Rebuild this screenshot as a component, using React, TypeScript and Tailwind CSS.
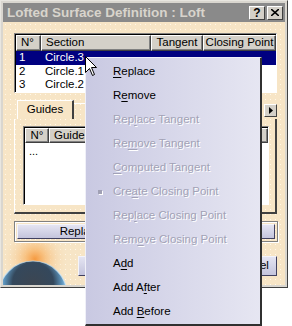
import React from "react";

type Item = { pre: string; key: string; post: string; disabled?: boolean; bullet?: boolean };

const items: Item[] = [
  { pre: "", key: "R", post: "eplace" },
  { pre: "R", key: "e", post: "move" },
  { pre: "Rep", key: "l", post: "ace Tangent", disabled: true },
  { pre: "Re", key: "m", post: "ove Tangent", disabled: true },
  { pre: "", key: "C", post: "omputed Tangent", disabled: true },
  { pre: "Cre", key: "a", post: "te Closing Point", disabled: true, bullet: true },
  { pre: "Rep", key: "l", post: "ace Closing Point", disabled: true },
  { pre: "Rem", key: "o", post: "ve Closing Point", disabled: true },
  { pre: "A", key: "d", post: "d" },
  { pre: "Add A", key: "f", post: "ter" },
  { pre: "Add ", key: "B", post: "efore" },
];

const sections = [
  ["1", "Circle.3"],
  ["2", "Circle.1"],
  ["3", "Circle.2"],
];

function HeaderCell({ children, className = "" }: { children?: React.ReactNode; className?: string }) {
  return (
    <div
      className={`h-full flex items-center whitespace-nowrap overflow-hidden bg-[#d4d0c8] border-t border-l border-t-white border-l-white border-r border-b border-r-[#404040] border-b-[#404040] shadow-[inset_-1px_-1px_0_#808080] ${className}`}
    >
      {children}
    </div>
  );
}

function Globe() {
  return (
    <svg width="90" height="42" viewBox="0 0 90 42" className="absolute left-0 bottom-0">
      <defs>
        <radialGradient id="glow" cx="32" cy="16" r="34" gradientUnits="userSpaceOnUse">
          <stop offset="0" stopColor="#f59a40" />
          <stop offset="0.3" stopColor="#f8bd78" stopOpacity="0.85" />
          <stop offset="1" stopColor="#f7e5c6" stopOpacity="0" />
        </radialGradient>
        <radialGradient id="earth" cx="30" cy="40" r="34" gradientUnits="userSpaceOnUse">
          <stop offset="0" stopColor="#3c4652" />
          <stop offset="0.6" stopColor="#34485c" />
          <stop offset="0.85" stopColor="#5c94bc" />
          <stop offset="1" stopColor="#a4d0ec" />
        </radialGradient>
      </defs>
      <rect x="0" y="0" width="90" height="42" fill="url(#glow)" />
      <circle cx="30" cy="52" r="34" fill="url(#earth)" />
      <circle cx="30" cy="52" r="34" fill="none" stroke="#bfe0f6" strokeWidth="1.2" opacity="0.7" />
    </svg>
  );
}

function Cursor() {
  return (
    <svg width="13" height="21" viewBox="0 0 13 21" className="absolute left-[85px] top-[56px]">
      <path
        d="M0.5 0.5 L0.5 16.5 L4.5 12.5 L7.5 19.5 L9.5 18.5 L6.5 11.5 L11.5 11.5 Z"
        fill="#fff"
        stroke="#000"
        strokeWidth="1"
      />
    </svg>
  );
}

const blueBtn =
  "bg-[linear-gradient(#e4e4f2,#c4c4dc)] border-t border-l border-t-[#f4f4fa] border-l-[#f4f4fa] border-r border-b border-r-[#404060] border-b-[#404060] flex items-center justify-center";

export default function App() {
  return (
    <div className="relative w-[292px] h-[326px] bg-white overflow-hidden font-['Liberation_Sans',Arial,sans-serif] text-[11.5px] text-black leading-none">
      {/* dialog window */}
      <div className="w-[288px] h-[288px] bg-[#d9d6cf] border-t border-l border-t-[#e8e6e0] border-l-[#e8e6e0] border-r border-b border-r-[#404040] border-b-[#404040] p-[2px] flex flex-col">
        {/* title bar */}
        <div className="h-[19px] bg-[#8a8a8a] flex items-center pl-[4px] pr-[2px] shrink-0">
          <span className="font-bold text-[13.5px] text-[#d8d4cc] flex-1 whitespace-nowrap">
            Lofted Surface Definition : Loft
          </span>
          <div className="flex gap-[2px]">
            <div className="w-[16px] h-[14px] bg-[#d4d0c8] border-t border-l border-t-white border-l-white border-r border-b border-r-[#404040] border-b-[#404040] flex items-center justify-center font-bold text-[12px]">
              ?
            </div>
            <div className="w-[16px] h-[14px] bg-[#d4d0c8] border-t border-l border-t-white border-l-white border-r border-b border-r-[#404040] border-b-[#404040] flex items-center justify-center">
              <svg width="8" height="7" viewBox="0 0 8 7">
                <path d="M0 0 L8 7 M8 0 L0 7" stroke="#000" strokeWidth="1.6" />
              </svg>
            </div>
          </div>
        </div>

        {/* body */}
        <div className="relative flex-1 bg-[#f7e5c6] bg-[radial-gradient(#fff8ea_0.8px,transparent_0.8px)] bg-[length:5px_5px] pl-[11px] pr-[8px] pt-[11px] flex flex-col overflow-hidden">
          <Globe />

          {/* sections list */}
          <div className="relative w-[263px] h-[60px] bg-white border-t border-l border-t-[#808080] border-l-[#808080] border-r border-b border-r-white border-b-white shadow-[inset_1px_1px_0_#000] pl-[1px] pt-[1px] flex flex-col">
            <div className="h-[16px] flex shrink-0">
              <HeaderCell className="w-[25px] px-[4px]">N°</HeaderCell>
              <HeaderCell className="w-[110px] px-[4px]">Section</HeaderCell>
              <HeaderCell className="w-[52px] justify-center">Tangent</HeaderCell>
              <HeaderCell className="flex-1 justify-center">Closing Point</HeaderCell>
            </div>
            {sections.map(([n, s], i) => (
              <div
                key={n}
                className={`h-[14px] flex items-center ${i === 0 ? "bg-[#000080] text-white" : ""}`}
              >
                <span className="w-[25px] pl-[3px]">{n}</span>
                <span className="pl-[4px]">{s}</span>
              </div>
            ))}
          </div>

          {/* tabs */}
          <div className="relative mt-[7px] h-[19px] flex items-end shrink-0">
            <div className="ml-[3px] h-[19px] w-[57px] border-t border-l border-t-white border-l-white border-r-2 border-r-[#404040] flex items-center justify-center bg-[#f7e5c6]">
              Guides
            </div>
            <div className="h-[16px] w-[20px] border-t border-t-white" />
            <div className="flex-1" />
            <div className="mb-[2px] w-[13px] h-[13px] bg-[#d4d0c8] border-t border-l border-t-white border-l-white border-r border-b border-r-[#404040] border-b-[#404040] flex items-center justify-center">
              <svg width="4" height="7" viewBox="0 0 4 7">
                <path d="M0 0 L4 3.5 L0 7 Z" fill="#000" />
              </svg>
            </div>
          </div>

          {/* tab panel */}
          <div className="relative w-[263px] h-[95px] border-l border-l-white border-b-2 border-b-[#404040] border-r-2 border-r-[#404040] pl-[8px] pt-[7px] shrink-0">
            <div className="w-[246px] h-[79px] bg-white border-t border-l border-t-[#808080] border-l-[#808080] border-r border-b border-r-white border-b-white shadow-[inset_1px_1px_0_#000] pl-[1px] pt-[1px]">
              <div className="h-[15px] flex">
                <HeaderCell className="w-[24px] justify-center">N°</HeaderCell>
                <HeaderCell className="w-[208px] px-[4px]">Guide</HeaderCell>
                <HeaderCell className="flex-1" />
              </div>
              <div className="pl-[4px] pt-[3px] text-[11px]">...</div>
            </div>
          </div>

          {/* replace buttons */}
          <div className="relative mt-[7px] w-[264px] h-[21px] border border-[#808080] shadow-[inset_1px_1px_0_#fff,1px_1px_0_#fff] p-[2px] flex gap-[3px] shrink-0">
            <div className={`flex-1 ${blueBtn}`}>Replace</div>
            <div className={`flex-1 ${blueBtn}`}>Remove</div>
          </div>

          {/* bottom buttons */}
          <div className="relative mt-[13px] h-[21px] flex items-center shrink-0">
            <div className={`ml-[64px] w-[60px] h-[20px] ${blueBtn}`}>OK</div>
            <div className="flex-1" />
            <div className={`w-[52px] h-[20px] ${blueBtn}`}>Cancel</div>
          </div>
        </div>
      </div>

      {/* context menu */}
      <div className="absolute z-20 left-[85px] top-[57px] w-[177px] h-[269px] bg-[linear-gradient(90deg,#c9c9e2,#e6e6f2)] border-t border-l border-t-[#f0f0f8] border-l-[#f0f0f8] border-r-2 border-b-2 border-r-[#303030] border-b-[#303030] pt-[2px]">
        {items.map((it, i) => (
          <div key={i} className="relative h-[24px] flex items-center pl-[27px] whitespace-nowrap text-[11.5px]">
            {it.bullet && (
              <span className="absolute left-[12px] top-[10px] w-[4px] h-[4px] bg-[#a0a0b4] shadow-[1px_1px_0_#fff]" />
            )}
            <span className={it.disabled ? "text-[#a2a2b6] [text-shadow:1px_1px_0_#fff]" : "text-black"}>
              {it.pre}
              <span className="underline underline-offset-[2px]">{it.key}</span>
              {it.post}
            </span>
          </div>
        ))}
      </div>

      <div className="absolute z-30 left-0 top-0">
        <Cursor />
      </div>
    </div>
  );
}
